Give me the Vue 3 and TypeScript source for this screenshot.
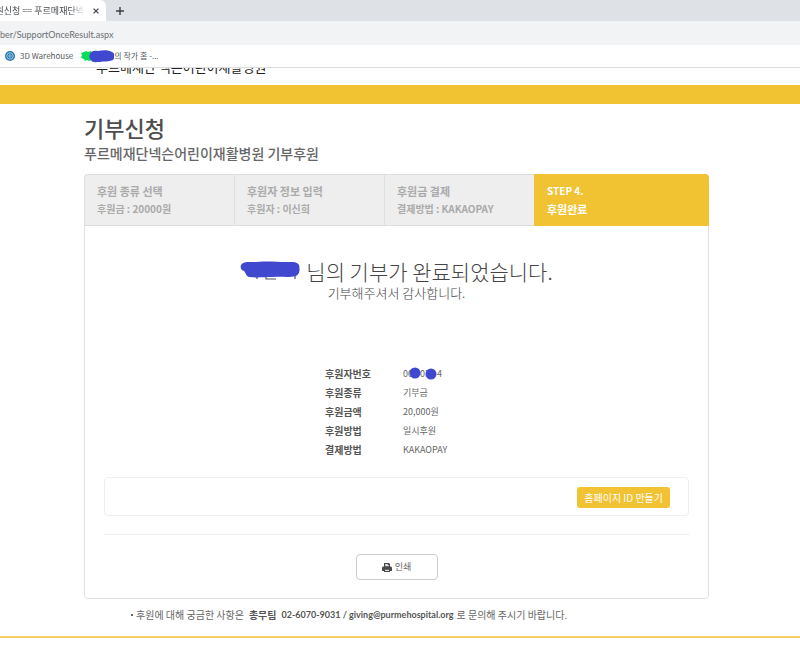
<script setup lang="ts">
interface Step {
  title: string
  detail: string
  active?: boolean
}

interface Detail {
  label: string
  value: string
}

const steps: Step[] = [
  { title: '후원 종류 선택', detail: '후원금 : 20000원' },
  { title: '후원자 정보 입력', detail: '후원자 : 이신희' },
  { title: '후원금 결제', detail: '결제방법 : KAKAOPAY' },
  { title: 'STEP 4.', detail: '후원완료', active: true },
]

const details: Detail[] = [
  { label: '후원종류', value: '기부금' },
  { label: '후원금액', value: '20,000원' },
  { label: '후원방법', value: '일시후원' },
  { label: '결제방법', value: 'KAKAOPAY' },
]

function printPage(): void {
  window.print()
}
</script>

<template>
  <div class="screen">
    <header class="browser">
      <div class="tabs">
        <div class="tab">
          <span class="tab-title"><span>후원신청 == 푸르메재단넥</span></span>
          <button class="icon-button" type="button" aria-label="탭 닫기">
            <svg width="6" height="6" viewBox="0 0 6 6"><path d="M.6.6l4.8 4.8M5.4.6L.6 5.4" stroke="#45494d" stroke-width="1.3" /></svg>
          </button>
        </div>
        <button class="icon-button new-tab" type="button" aria-label="새 탭">
          <svg width="8" height="8" viewBox="0 0 8 8"><path d="M4 0v8M0 4h8" stroke="#3c4043" stroke-width="1.4" /></svg>
        </button>
      </div>
      <div class="address">ber/SupportOnceResult.aspx</div>
      <nav class="bookmarks">
        <a class="bookmark" href="#">
          <svg width="10" height="10" viewBox="0 0 10 10">
            <circle cx="5" cy="5" r="5" fill="#2c78b0" />
            <circle cx="5" cy="5" r="3.2" fill="none" stroke="#a9d3ee" stroke-width=".9" />
            <circle cx="5" cy="5" r="1.2" fill="none" stroke="#a9d3ee" stroke-width=".8" />
          </svg>
          <span>3D Warehouse</span>
        </a>
        <a class="bookmark second" href="#">
          <svg width="34" height="14" viewBox="0 0 34 14">
            <path d="M1 4l3-1 2-1 2 1 3-1 1 9-3 1-2-1-2 1-1-2-3-1 1-3z" fill="#06dc55" />
            <path d="M10 5c1-3 4-4 8-3 5-1 11-1 14 1 3 1 3 6 1 8-4 2-10 1-13 2-4 0-8 1-9-2-2-2-2-4-1-6z" fill="#4048cf" />
          </svg>
          <span>의 작가 홈 -...</span>
        </a>
      </nav>
    </header>

    <div class="site-name"><span>푸르메재단 넥슨어린이재활병원</span></div>
    <div class="band"></div>

    <main class="content">
      <h1>기부신청</h1>
      <h2>푸르메재단넥슨어린이재활병원 기부후원</h2>

      <section class="panel">
        <ol class="steps">
          <li v-for="step in steps" :key="step.title" :class="['step', { active: step.active }]">
            <span class="step-title">{{ step.title }}</span>
            <span class="step-detail">{{ step.detail }}</span>
          </li>
        </ol>

        <div class="panel-body">
          <div class="message">
            <p class="headline">
              <svg class="name-mark" width="60" height="20" viewBox="0 0 60 20">
                <path d="M17 15v3M26 14v4h10M55 14v4" fill="none" stroke="#555" stroke-width="1.2" />
                <path d="M1 4C3 0 10 1 17 1c12-1 20 0 29 0 5 0 11-1 13 3 1 4 1 9-3 11-9 2-14 0-23 1-9 0-15 1-24 0-3-1-3-4-5-6C1 9 0 7 1 4z" fill="#4048cf" />
              </svg>
              <span>님의 기부가 완료되었습니다.</span>
            </p>
            <p class="thanks">기부해주셔서 감사합니다.</p>
          </div>

          <table class="details">
            <tbody>
              <tr>
                <th scope="row">후원자번호</th>
                <td>
                  <span class="number">
                    <span>00</span><span>03</span><span>4</span>
                    <svg class="number-mark" width="40" height="14" viewBox="0 0 40 14">
                      <circle cx="12" cy="6" r="5.5" fill="#4048cf" />
                      <circle cx="28" cy="7" r="5.5" fill="#4048cf" />
                    </svg>
                  </span>
                </td>
              </tr>
              <tr v-for="row in details" :key="row.label">
                <th scope="row">{{ row.label }}</th>
                <td>{{ row.value }}</td>
              </tr>
            </tbody>
          </table>

          <div class="account">
            <button class="create" type="button">홈페이지 ID 만들기</button>
          </div>

          <div class="actions">
            <button class="print" type="button" @click="printPage">
              <svg width="10" height="9" viewBox="0 0 10 9">
                <path d="M2 0h5l1 1v3H2z" fill="#4a4a4a" />
                <path d="M3.2 1h2.6v1h1v1.4H3.2z" fill="#ddd" />
                <path d="M1 3.4h8l1 1V8H8V6.4H2V8H0V4.4z" fill="#4a4a4a" />
                <path d="M2 6h6v3H2z" fill="#4a4a4a" />
                <path d="M3 6.8h4V8H3z" fill="#ddd" />
              </svg>
              <span>인쇄</span>
            </button>
          </div>
        </div>
      </section>

      <p class="contact">
        <span class="dot"></span>
        <span>후원에 대해 궁금한 사항은</span>
        <strong>총무팀</strong>
        <strong class="reach">02-6070-9031 / giving@purmehospital.org</strong>
        <span class="tail">로 문의해 주시기 바랍니다.</span>
      </p>
    </main>
    <footer class="bottom-line"></footer>
  </div>
</template>

<style>
body {
  margin: 0;
  background: #fff;
}
</style>

<style scoped>
.screen {
  overflow: hidden;
  color: #666;
  font-family: "Noto Sans CJK KR", "Open Sans", sans-serif;
  font-size: 9px;
  line-height: 18px;
}
button {
  font: inherit;
  cursor: pointer;
}
h1, h2, p, ol {
  margin: 0;
  padding: 0;
}
.tabs {
  display: flex;
  height: 21px;
  background: #dee1e6;
}
.tab {
  display: flex;
  align-items: center;
  gap: 9px;
  width: 106px;
  box-sizing: border-box;
  background: #fff;
  border-radius: 0 6px 0 0;
  color: #45494d;
}
.tab-title {
  display: flex;
  justify-content: flex-end;
  width: 84px;
  overflow: hidden;
  white-space: nowrap;
  mask-image: linear-gradient(to right, #000 85%, transparent);
}
.icon-button {
  display: flex;
  padding: 0;
  border: 0;
  background: none;
}
.new-tab {
  align-self: center;
  margin-left: 10px;
}
.address {
  height: 24px;
  background: #f1f3f4;
  color: #6b6f73;
  font-family: Lato, "Noto Sans CJK KR", sans-serif;
  line-height: 27px;
}
.bookmarks {
  display: flex;
  align-items: center;
  height: 22px;
  padding: 0 5px;
  border-bottom: 1px solid #dcdee0;
  font-size: 8px;
}
.bookmark {
  display: flex;
  align-items: center;
  gap: 5px;
  color: #55595d;
  text-decoration: none;
  white-space: nowrap;
}
.second {
  gap: 0;
  margin-left: 7px;
}
.site-name {
  display: flex;
  align-items: flex-end;
  height: 8px;
  margin: 0 0 9px 96px;
  overflow: hidden;
  color: #222;
  font-size: 13px;
}
.band {
  height: 19px;
  background: #f1c232;
}
.content {
  margin: 0 91px 0 84px;
}
h1 {
  padding-top: 8px;
  color: #4d4d4d;
  font-size: 22px;
  font-weight: 500;
  line-height: 30px;
}
h2 {
  padding-bottom: 9px;
  font-size: 14px;
  font-weight: 500;
  line-height: 23px;
}
.panel {
  border: 1px solid #e2e2e2;
  border-radius: 4px;
}
.steps {
  display: grid;
  grid-template-columns: 150fr 150fr 150fr 175fr;
  margin: -1px -1px 0;
  list-style: none;
}
.step {
  display: flex;
  flex-direction: column;
  padding: 7px 12px;
  border: 1px solid #dedede;
  border-right: 0;
  background: #eee;
  color: #aaa;
  font-size: 10px;
  font-weight: 700;
}
.step-title,
.active .step-detail {
  font-size: 11px;
}
.active .step-title {
  font-size: 10px;
}
.step:first-child {
  border-radius: 4px 0 0;
}
.step.active {
  border-color: #f1c232;
  border-radius: 0 4px 0 0;
  background: #f1c232;
  color: #fff;
}
.panel-body {
  padding: 32px 19px 18px;
}
.message {
  text-align: center;
  color: #444;
}
.headline {
  display: flex;
  justify-content: center;
  gap: 6px;
  font-size: 21px;
  font-weight: 300;
  line-height: 26px;
}
.name-mark {
  margin-top: 3px;
}
.thanks {
  font-size: 13px;
  font-weight: 300;
  line-height: 18px;
}
.details {
  width: 143px;
  margin: 62px auto 18px;
  border-collapse: collapse;
}
.details th,
.details td {
  padding: 0;
  line-height: 19px;
  text-align: left;
}
.details th {
  width: 78px;
  color: #555;
  font-size: 10px;
  font-weight: 700;
}
.number {
  display: flex;
  position: relative;
  gap: 7px;
}
.number-mark {
  position: absolute;
  top: 3px;
  left: 0;
}
.account {
  display: flex;
  justify-content: flex-end;
  padding: 9px 18px 7px;
  border: 1px solid #eee;
  border-radius: 4px;
}
.create {
  height: 21px;
  padding: 0 7px;
  border: 0;
  border-radius: 3px;
  background: #f1c232;
  color: #fff;
  font-size: 10px;
}
.actions {
  display: flex;
  justify-content: center;
  margin-top: 18px;
  padding-top: 19px;
  border-top: 1px solid #eee;
}
.print {
  display: flex;
  align-items: center;
  justify-content: center;
  gap: 3px;
  width: 82px;
  height: 26px;
  border: 1px solid #ccc;
  border-radius: 4px;
  background: #fff;
  color: #666;
}
.contact {
  display: flex;
  align-items: center;
  gap: 5px;
  padding: 7px 0 12px 47px;
  font-size: 10px;
  white-space: nowrap;
}
.contact strong {
  color: #555;
  font-weight: 700;
}
.contact .reach {
  font-family: Lato, "Noto Sans CJK KR", sans-serif;
  font-size: 9px;
}
.dot {
  width: 2px;
  height: 2px;
  margin-right: -2px;
  background: #666;
}
.tail {
  margin-left: -2px;
}
.bottom-line {
  height: 2px;
  background: #f6cf62;
}
</style>
